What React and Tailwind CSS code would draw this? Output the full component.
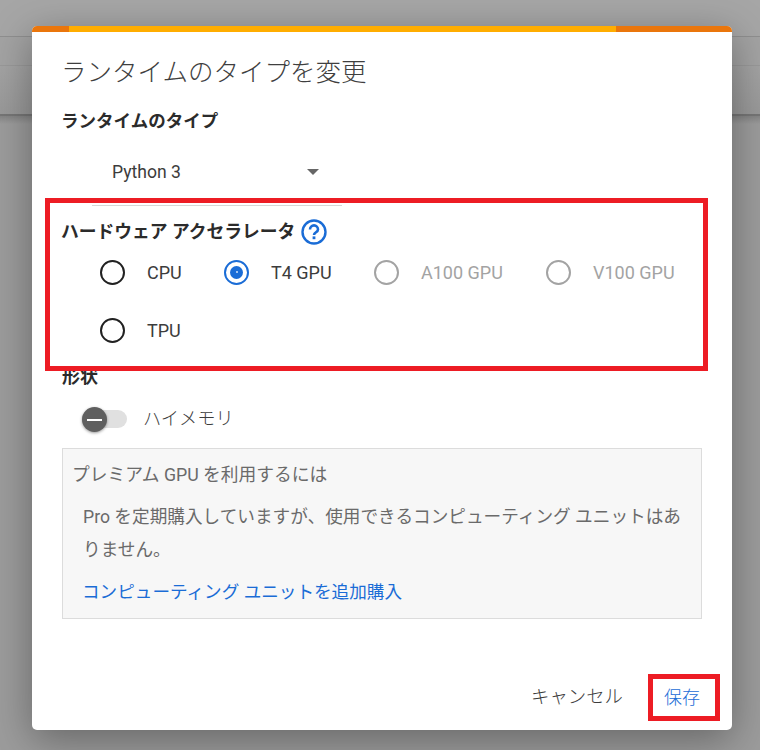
import React from 'react';

function Radio({ label, checked, disabled, className }) {
  const ring = checked ? 'border-[#1a6cd6]' : disabled ? 'border-[#a3a3a3]' : 'border-[#212121]';
  return (
    <div className={`flex items-center h-[58px] ${className || ''}`}>
      <span className={`w-[25px] h-[25px] rounded-full border-2 flex items-center justify-center ${ring}`}>
        {checked && (
          <span className="w-[13px] h-[13px] rounded-full bg-[#1a6cd6] flex items-center justify-center">
            <span className="w-[2px] h-[2px] rounded-full bg-[#cfe0f7]" />
          </span>
        )}
      </span>
      <span className={`ml-[22px] text-[18px] ${disabled ? 'text-[#a3a3a3]' : 'text-[#3c3c3c]'}`}>{label}</span>
    </div>
  );
}

export default function App() {
  return (
    <div className="relative w-[760px] h-[750px] overflow-hidden bg-[#9c9c9c] font-['Roboto','Noto_Sans_CJK_JP',sans-serif]">
      {/* page behind the dialog */}
      <div className="h-[37px] bg-[#a6a6a6] border-b border-[#8f8f8f]" />
      <div className="h-[29px] bg-[#a3a3a3] border-b border-[#999999]" />
      <div className="h-[50px] bg-gradient-to-b from-[#a3a3a3] to-[#999999] border-b-2 border-[#767676]" />
      <div className="h-[8px] bg-gradient-to-b from-[#858585] to-[#9c9c9c]" />

      {/* dialog */}
      <div className="absolute left-[32px] top-[26px] w-[700px] h-[704px] bg-white rounded-[5px] overflow-hidden shadow-[0_10px_40px_rgba(0,0,0,0.35)] flex flex-col">
        <div className="flex h-[6px] shrink-0">
          <div className="w-[37px] bg-[#ea760c]" />
          <div className="w-[547px] bg-[#ffad00]" />
          <div className="flex-1 bg-[#ea760c]" />
        </div>
        <div className="px-[30px] flex flex-col flex-1">
          <h1 className="mt-[22px] -ml-[1px] h-[36px] text-[25.5px] leading-[36px] font-light text-[#3f3f3f] whitespace-nowrap">ランタイムのタイプを変更</h1>
          <h2 className="mt-[18px] -ml-[1px] h-[26px] text-[17.5px] leading-[26px] font-bold text-[#2b2b2b] whitespace-nowrap">ランタイムのタイプ</h2>

          <div className="mt-[13px] ml-[30px] w-[250px] h-[59px] border-b border-[#d6d6d6] pl-[20px] pr-[23px] flex items-center justify-between text-[17.6px] text-[#3c3c3c]">
            <span className="-mt-[7px]">Python 3</span>
            <span className="-mt-[9px] w-0 h-0 border-x-[6px] border-x-transparent border-t-[6px] border-t-[#666666]" />
          </div>

          <div className="mt-[10px] -ml-[1px] flex items-center h-[32px]">
            <h2 className="text-[17.75px] font-bold text-[#2b2b2b] whitespace-nowrap">ハードウェア アクセラレータ</h2>
            <svg className="ml-[6px]" width="26" height="26" viewBox="0 0 26 26" fill="none">
              <circle cx="13" cy="13" r="11.5" stroke="#1a6cd6" strokeWidth="2.4" />
              <path d="M9 10.4a4 4 0 0 1 8 0c0 2.8-4 2.8-4 5.6" stroke="#1a6cd6" strokeWidth="2.6" />
              <rect x="11.6" y="17.4" width="2.8" height="2.8" fill="#1a6cd6" />
            </svg>
          </div>

          <div className="ml-[38px] -mt-[5px] flex">
            <Radio label="CPU" className="w-[124px]" />
            <Radio label="T4 GPU" checked className="w-[150px]" />
            <Radio label="A100 GPU" disabled className="w-[172px]" />
            <Radio label="V100 GPU" disabled />
          </div>
          <div className="ml-[38px]">
            <Radio label="TPU" />
          </div>

          <h2 className="mt-[6px] h-[24px] text-[18px] leading-[24px] font-bold text-[#2b2b2b]">形状</h2>

          <div className="mt-[17px] ml-[20px] flex items-center h-[26px]">
            <div className="relative w-[45px] h-[18px] rounded-full bg-[#e0e0e0]">
              <span className="absolute left-0 -top-[3px] w-[25px] h-[25px] rounded-full bg-[#5f5f5f] shadow-[0_1px_3px_rgba(0,0,0,0.4)] flex items-center justify-center">
                <span className="w-[15px] h-[2px] bg-white" />
              </span>
            </div>
            <span className="ml-[16px] text-[18.2px] font-light text-[#3c3c3c]">ハイメモリ</span>
          </div>

          <div className="mt-[16px] h-[171px] border border-[#dcdcdc] bg-[#f7f7f7] pl-[9px] pr-[16px] pt-[14px]">
            <p className="text-[17.75px] leading-[24px] text-[#6a6a6a] whitespace-nowrap">プレミアム GPU を利用するには</p>
            <div className="pl-[11px] mt-[14px]">
              <p className="text-[17.65px] leading-[33px] text-[#6a6a6a]">Pro を定期購入していますが、使用できるコンピューティング ユニットはありません。</p>
              <a className="block -ml-[1px] mt-[13px] text-[17.6px] leading-[24px] text-[#1a6cd6] whitespace-nowrap">コンピューティング ユニットを追加購入</a>
            </div>
          </div>

          <div className="mt-auto mb-[20px] flex justify-end items-center gap-[41px] pr-[2px] h-[26px]">
            <button className="text-[18.4px] font-light text-[#3c3c3c]">キャンセル</button>
            <button className="text-[18px] font-light text-[#1a6cd6]">保存</button>
          </div>
        </div>
      </div>

      {/* red annotation boxes */}
      <div className="absolute left-[45px] top-[198px] w-[663px] h-[173px] border-[5px] border-[#ed1c24]" />
      <div className="absolute left-[648px] top-[674px] w-[72px] h-[47px] border-[5px] border-[#ed1c24]" />
    </div>
  );
}
